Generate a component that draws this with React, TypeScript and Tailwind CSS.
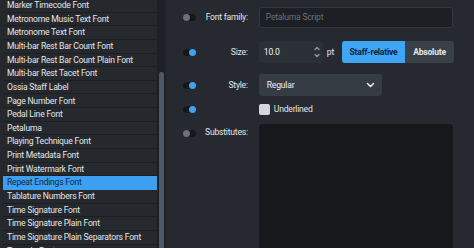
import React from "react";

const items = [
  "Marker Timecode Font",
  "Metronome Music Text Font",
  "Metronome Text Font",
  "Multi-bar Rest Bar Count Font",
  "Multi-bar Rest Bar Count Plain Font",
  "Multi-bar Rest Tacet Font",
  "Ossia Staff Label",
  "Page Number Font",
  "Pedal Line Font",
  "Petaluma",
  "Playing Technique Font",
  "Print Metadata Font",
  "Print Watermark Font",
  "Repeat Endings Font",
  "Tablature Numbers Font",
  "Time Signature Font",
  "Time Signature Plain Font",
  "Time Signature Plain Separators Font",
  "Tremolo Font",
];

function Toggle({ on }: { on: boolean }) {
  return (
    <div className="relative w-[13px] h-[7px] rounded-full bg-[#15171a]">
      <div
        className={
          on
            ? "absolute right-0 top-0 w-[7px] h-[7px] rounded-full bg-[#3fa3f0]"
            : "absolute left-0 top-0 w-[7px] h-[7px] rounded-full bg-[#6b7077]"
        }
      />
    </div>
  );
}

export default function App() {
  return (
    <div
      className="w-[474px] h-[248px] overflow-hidden flex bg-[#262a30] text-[8.6px] tracking-[-0.22px] text-[#e3e6e9]"
      style={{ fontFamily: "Roboto, 'Liberation Sans', sans-serif" }}
    >
      {/* list */}
      <div className="w-[158px] h-full bg-[#25292e] overflow-hidden">
        <div className="-mt-[1px] pl-[3px]">
          {items.map((t) => {
            const sel = t === "Repeat Endings Font";
            return (
              <div
                key={t}
                className={
                  sel
                    ? "h-[13.65px] flex items-center pl-[4px] bg-[#3d9fef] text-[#0f2944] border-b border-[#3d9fef]"
                    : "h-[13.65px] flex items-center pl-[4px] border-b border-[#1b1e22]"
                }
              >
                <span className="whitespace-nowrap leading-none">{t}</span>
              </div>
            );
          })}
        </div>
      </div>
      {/* scrollbar */}
      <div className="w-[9px] h-full bg-[#1d2024] flex flex-col px-[2px] pt-[72px]">
        <div className="flex-1 rounded-t-[2px] bg-[#4e5762]" />
      </div>
      {/* panel */}
      <div className="flex-1 h-full flex flex-col pl-[17px] pr-[20px] pt-[7px]">
        {/* Font family */}
        <div className="flex items-center h-[21px]">
          <Toggle on={false} />
          <div className="w-[52px] text-right">Font family:</div>
          <div className="ml-[11px] w-[194px] h-[21px] rounded-[3px] bg-[#1c1f23] border border-[#32373d] flex items-center pl-[6px] text-[#6a7077]">
            Petaluma Script
          </div>
        </div>
        {/* Size */}
        <div className="flex items-center h-[22px] mt-[13px]">
          <Toggle on={true} />
          <div className="w-[52px] text-right">Size:</div>
          <div className="ml-[11px] w-[64px] h-[22px] rounded-[3px] bg-[#2b3036] flex items-center pl-[5px] pr-[2px] justify-between">
            <span className="text-[#eef0f2]">10.0</span>
            <svg width="8" height="16" viewBox="0 0 8 16" fill="none" stroke="#9aa1a8" strokeWidth="1.2" strokeLinecap="round" strokeLinejoin="round">
              <path d="M2 5.5 L4 3.5 L6 5.5" />
              <path d="M2 10.5 L4 12.5 L6 10.5" />
            </svg>
          </div>
          <span className="ml-[4px]">pt</span>
          <div className="ml-[8px] flex h-[22px] rounded-[3px] overflow-hidden font-bold">
            <div className="w-[63px] bg-[#3fa6f5] text-[#0e2540] flex items-center justify-center">Staff-relative</div>
            <div className="w-[49px] bg-[#3a4048] text-[#e4e7ea] flex items-center justify-center">Absolute</div>
          </div>
        </div>
        {/* Style */}
        <div className="flex items-center h-[22px] mt-[11px]">
          <Toggle on={true} />
          <div className="w-[52px] text-right">Style:</div>
          <div className="ml-[11px] w-[123px] h-[22px] rounded-[3px] bg-[#363c44] flex items-center justify-between pl-[8px] pr-[7px]">
            <span className="text-[#eef0f2]">Regular</span>
            <svg width="9" height="6" viewBox="0 0 9 6" fill="none" stroke="#eef0f2" strokeWidth="1.5" strokeLinecap="round" strokeLinejoin="round">
              <path d="M1.5 1.5 L4.5 4.5 L7.5 1.5" />
            </svg>
          </div>
        </div>
        {/* Underlined */}
        <div className="flex items-center h-[11px] mt-[8px]">
          <Toggle on={true} />
          <div className="w-[52px]" />
          <div className="ml-[11px] w-[11px] h-[11px] rounded-[2px] bg-[#d3d7db]" />
          <span className="ml-[4px]">Underlined</span>
        </div>
        {/* Substitutes */}
        <div className="flex mt-[9px] flex-1">
          <div className="h-[12px] mt-[3px] flex items-center">
            <Toggle on={false} />
          </div>
          <div className="w-[52px] text-right mt-[2px] leading-[12px]">Substitutes:</div>
          <div className="ml-[11px] w-[194px] rounded-t-[3px] bg-[#17191c]" />
        </div>
      </div>
    </div>
  );
}
